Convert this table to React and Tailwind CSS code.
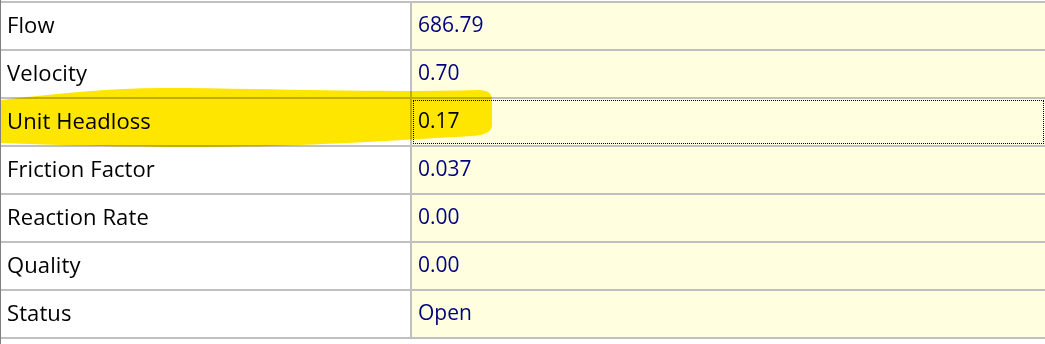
const ROWS = [
  ['Flow', '686.79'],
  ['Velocity', '0.70'],
  ['Unit Headloss', '0.17'],
  ['Friction Factor', '0.037'],
  ['Reaction Rate', '0.00'],
  ['Quality', '0.00'],
  ['Status', 'Open'],
]

const FOCUSED = 2

export default function App() {
  return (
    <div
      className="relative w-[1045px] h-[344px] overflow-hidden bg-white pt-px border-l border-[#808080]"
      style={{ fontFamily: '"Open Sans", "Noto Sans", sans-serif' }}
    >
      {ROWS.map(([label, value], i) => (
        <div key={label} className="flex h-[48px] border-t-2 border-[#c0c0c0]">
          <div className="w-[409px] flex items-center pl-[6px] pb-[4px] text-[22px] tracking-[0.1px] text-black">
            {label}
          </div>
          <div className="w-[2px] bg-[#c0c0c0]" />
          <div className="flex-1 bg-[#ffffe0] p-px">
            <div
              className={
                'h-full flex items-center pl-[4px] pb-[3px] text-[21px] text-[#000080] ' +
                (i === FOCUSED ? 'border border-dotted border-black' : 'border border-transparent')
              }
            >
              {value}
            </div>
          </div>
        </div>
      ))}
      <div className="border-t-2 border-[#c0c0c0]" />

      {/* highlighter stroke */}
      <svg
        className="absolute left-0 top-0 pointer-events-none mix-blend-multiply"
        width="500"
        height="160"
        viewBox="0 0 500 160"
      >
        <path
          d="M0,100 C60,93 110,88 160,88 C260,88 360,93 478,90 Q492,90 491,102 L491,126 Q490,135 470,136 C400,140 300,147 200,147 C120,147 50,145 0,143 Z"
          fill="#ffe600"
        />
      </svg>
    </div>
  )
}
